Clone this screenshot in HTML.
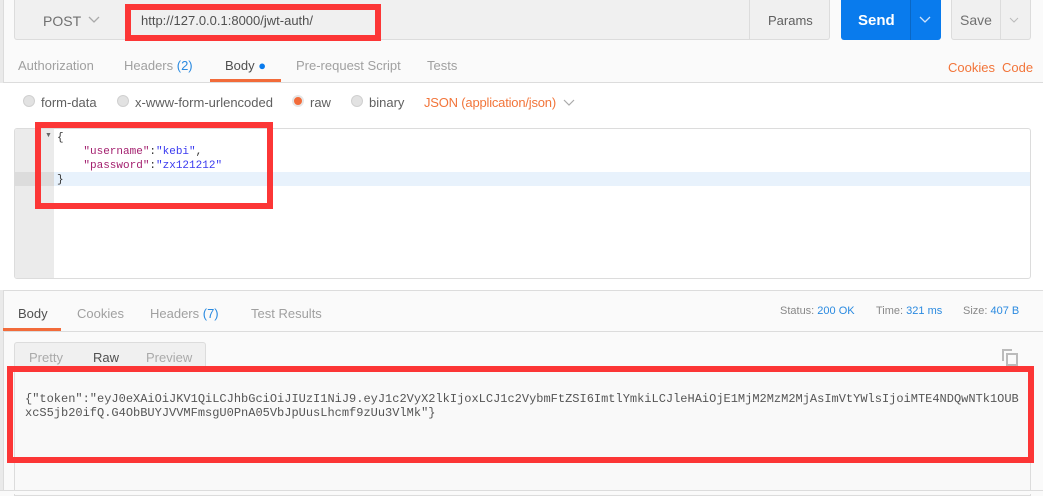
<!DOCTYPE html>
<html><head><meta charset="utf-8"><style>
*{box-sizing:border-box;margin:0;padding:0}
body{width:1043px;height:494px;background:#fafafa;font-family:"Liberation Sans",Arial,sans-serif;position:relative;overflow:hidden;font-size:12px;color:#808080}
.a{position:absolute}
.red{position:absolute;border:6px solid #fc3636}
.mono{font-family:"Liberation Mono",monospace}
.rd{position:absolute;width:12px;height:12px;border-radius:50%;background:#e2e2e2;border:1px solid #d0d0d0}
</style></head><body>
<div class="a" style="left:0;top:0;width:3px;height:494px;background:#eaeaea"></div>
<div class="a" style="left:3px;top:0;width:1px;height:494px;background:#dcdcdc"></div>
<!-- top bar -->
<div class="a" style="left:14px;top:0;width:816px;height:40px;background:#f0f0f0;border:1px solid #dcdcdc;border-top:none;border-radius:0 0 3px 3px"></div>
<div class="a" style="left:43px;top:13px;font-size:14px;color:#707070">POST</div>
<svg class="a" style="left:88px;top:16px" width="12" height="8"><path d="M1 1L6 6L11 1" stroke="#aaa" fill="none" stroke-width="1.3"/></svg>
<div class="a" style="left:141px;top:13px;font-size:13px;color:#505050">http://127.0.0.1:8000/jwt-auth/</div>
<div class="a" style="left:749px;top:0;width:1px;height:40px;background:#dcdcdc"></div>
<div class="a" style="left:768px;top:13px;font-size:13px;color:#606060">Params</div>
<div class="a" style="left:841px;top:0;width:100px;height:40px;background:#097bed;border-radius:0 0 3px 3px"></div>
<div class="a" style="left:910px;top:0;width:1px;height:40px;background:#0a67c4"></div>
<div class="a" style="left:858px;top:12px;font-size:15px;font-weight:bold;color:#fff">Send</div>
<svg class="a" style="left:919px;top:16px" width="12" height="8"><path d="M1 1L6 6L11 1" stroke="#cfe3fb" fill="none" stroke-width="1.3"/></svg>
<div class="a" style="left:951px;top:0;width:80px;height:40px;background:#f0f0f0;border:1px solid #dcdcdc;border-top:none;border-radius:0 0 3px 3px"></div>
<div class="a" style="left:1000px;top:0;width:1px;height:40px;background:#dcdcdc"></div>
<div class="a" style="left:960px;top:12px;font-size:14px;color:#707070">Save</div>
<svg class="a" style="left:1009px;top:17px" width="10" height="6"><path d="M1 1L5 5L9 1" stroke="#bbb" fill="none" stroke-width="1"/></svg>
<div class="red" style="left:125px;top:4px;width:256px;height:37px"></div>
<!-- request tabs -->
<div class="a" style="left:4px;top:82px;width:1039px;height:1px;background:#dcdcdc"></div>
<div class="a" style="left:18px;top:58px;font-size:13px;color:#a0a0a0">Authorization</div>
<div class="a" style="left:124px;top:58px;font-size:13px;color:#a0a0a0">Headers <span style="color:#2a8ae0">(2)</span></div>
<div class="a" style="left:225px;top:58px;font-size:13px;color:#505050">Body <span style="color:#097bed">●</span></div>
<div class="a" style="left:210px;top:79px;width:71px;height:3px;background:#f26b3a"></div>
<div class="a" style="left:296px;top:58px;font-size:13px;color:#a0a0a0">Pre-request Script</div>
<div class="a" style="left:427px;top:58px;font-size:13px;color:#a0a0a0">Tests</div>
<div class="a" style="left:948px;top:60px;font-size:13px;color:#f2753a">Cookies</div>
<div class="a" style="left:1002px;top:60px;font-size:13px;color:#f2753a">Code</div>
<!-- radios -->
<div class="a" style="left:0;top:83px;width:1043px;height:40px;background:#fff"></div>
<div class="rd" style="left:23px;top:95px"></div>
<div class="a" style="left:41px;top:95px;font-size:13px;color:#606060">form-data</div>
<div class="rd" style="left:117px;top:95px"></div>
<div class="a" style="left:135px;top:95px;font-size:13px;color:#606060">x-www-form-urlencoded</div>
<div class="a" style="left:292px;top:95px;width:12px;height:12px;border-radius:50%;background:#f26b3a;border:2px solid #e6e6e6"></div>
<div class="a" style="left:310px;top:95px;font-size:13px;color:#606060">raw</div>
<div class="rd" style="left:351px;top:95px"></div>
<div class="a" style="left:369px;top:95px;font-size:13px;color:#606060">binary</div>
<div class="a" style="left:424px;top:95px;font-size:13px;color:#f2753a;letter-spacing:-0.2px">JSON (application/json)</div>
<svg class="a" style="left:563px;top:99px" width="12" height="8"><path d="M1 1L6 6L11 1" stroke="#aaa" fill="none" stroke-width="1.2"/></svg>
<!-- editor -->
<div class="a" style="left:0;top:123px;width:1043px;height:167px;background:#fff"></div>
<div class="a" style="left:14px;top:128px;width:1017px;height:151px;border:1px solid #dcdcdc;border-radius:3px;background:#fff;overflow:hidden">
 <div class="a" style="left:0;top:0;width:39px;height:151px;background:#ebebeb"></div>
 <div class="a" style="left:0;top:43px;width:39px;height:14px;background:#dcdcdc"></div>
 <div class="a" style="left:39px;top:43px;width:980px;height:14px;background:#e8f2fc"></div>
</div>
<div class="a" style="left:45px;top:132px;font-size:7px;color:#666">▼</div>
<div class="a mono" style="left:57px;top:131px;font-size:11px;line-height:14px;color:#333;white-space:pre">{
    <span style="color:#a31f6e">"username"</span>:<span style="color:#3a3af0">"kebi"</span>,
    <span style="color:#a31f6e">"password"</span>:<span style="color:#3a3af0">"zx121212"</span>
}</div>
<div class="red" style="left:35px;top:122px;width:238px;height:87px"></div>
<!-- response -->
<div class="a" style="left:4px;top:290px;width:1039px;height:1px;background:#dcdcdc"></div>
<div class="a" style="left:4px;top:331px;width:1039px;height:1px;background:#dcdcdc"></div>
<div class="a" style="left:18px;top:306px;font-size:13px;color:#505050">Body</div>
<div class="a" style="left:3px;top:328px;width:58px;height:3px;background:#f26b3a"></div>
<div class="a" style="left:77px;top:306px;font-size:13px;color:#a0a0a0">Cookies</div>
<div class="a" style="left:150px;top:306px;font-size:13px;color:#a0a0a0">Headers <span style="color:#2a8ae0">(7)</span></div>
<div class="a" style="left:251px;top:306px;font-size:13px;color:#a0a0a0">Test Results</div>
<div class="a" style="left:780px;top:305px;font-size:11px;color:#888">Status: <span style="color:#2a8ae0">200 OK</span></div>
<div class="a" style="left:876px;top:305px;font-size:11px;color:#888">Time: <span style="color:#2a8ae0">321 ms</span></div>
<div class="a" style="left:963px;top:305px;font-size:11px;color:#888">Size: <span style="color:#2a8ae0">407 B</span></div>
<div class="a" style="left:14px;top:342px;width:192px;height:30px;background:#f0f0f0;border:1px solid #dcdcdc;border-radius:3px 3px 0 0"></div>
<div class="a" style="left:29px;top:350px;font-size:13px;color:#aaa">Pretty</div>
<div class="a" style="left:93px;top:350px;font-size:13px;color:#505050">Raw</div>
<div class="a" style="left:146px;top:350px;font-size:13px;color:#aaa">Preview</div>
<div class="a" style="left:1002px;top:349px;width:10px;height:12px;border:2px solid #bbb;border-right:none;border-bottom:none"></div>
<div class="a" style="left:1006px;top:353px;width:12px;height:13px;border:2px solid #bbb;background:#fafafa"></div>
<div class="a" style="left:14px;top:371px;width:1017px;height:125px;border:1px solid #dcdcdc;background:#f9f9f9"></div>
<div class="a mono" style="left:25px;top:392px;font-size:12px;line-height:14px;color:#555;white-space:pre">{"token":"eyJ0eXAiOiJKV1QiLCJhbGciOiJIUzI1NiJ9.eyJ1c2VyX2lkIjoxLCJ1c2VybmFtZSI6ImtlYmkiLCJleHAiOjE1MjM2MzM2MjAsImVtYWlsIjoiMTE4NDQwNTk1OUB
xcS5jb20ifQ.G4ObBUYJVVMFmsgU0PnA05VbJpUusLhcmf9zUu3VlMk"}</div>
<div class="red" style="left:7px;top:366px;width:1027px;height:97px"></div>
<div class="a" style="left:0;top:490px;width:1043px;height:4px;background:#fafafa;border-top:1px solid #dcdcdc"></div>
</body></html>
